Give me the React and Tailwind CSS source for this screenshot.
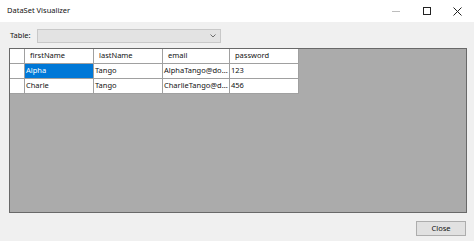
import React from "react";

// rows shown in the grid
const columns = [
  { key: "firstName", width: "w-[69px]" },
  { key: "lastName", width: "w-[69px]" },
  { key: "email", width: "w-[67px]" },
  { key: "password", width: "w-[69px]" },
];

const rows = [
  { firstName: "Alpha", lastName: "Tango", email: "AlphaTango@do...", password: "123" },
  { firstName: "Charle", lastName: "Tango", email: "CharlieTango@d...", password: "456" },
];

const App = () => {
  return (
    <div
      className="w-[474px] h-[244px] bg-[#f0f0f0] flex flex-col text-[#111] overflow-hidden border-b-[3px] border-white"
      style={{ fontFamily: '"Noto Sans", "Open Sans", sans-serif' }}
    >
      {/* title bar */}
      <div className="h-[22px] bg-white flex items-center shrink-0">
        <div className="pl-[7px] text-[7.5px] flex-1">DataSet Visualizer</div>
        <div className="flex items-center h-full">
          {/* minimize */}
          <div className="w-[31px] h-full flex items-center justify-center">
            <div className="w-[8px] h-px bg-[#bdbdbd]" />
          </div>
          {/* maximize */}
          <div className="w-[31px] h-full flex items-center justify-center">
            <div className="w-[8px] h-[8px] border border-[#222]" />
          </div>
          {/* close */}
          <div className="w-[31px] h-full flex items-center justify-center mr-[1px]">
            <svg width="9" height="9" viewBox="0 0 9 9">
              <path d="M0.5 0.5 L8.5 8.5 M8.5 0.5 L0.5 8.5" stroke="#222" strokeWidth="1" />
            </svg>
          </div>
        </div>
      </div>

      {/* body */}
      <div className="flex-1 flex flex-col px-[9px] pt-[7px]">
        {/* table picker */}
        <div className="flex items-center h-[14px]">
          <span className="text-[7.5px] pl-[1px] w-[28px]">Table:</span>
          <div className="w-[184px] h-[14px] bg-[#e3e3e3] border border-[#c8c8c8] flex items-center justify-end pr-[4px]">
            <svg width="6" height="4" viewBox="0 0 6 4">
              <path d="M0.5 0.5 L3 3 L5.5 0.5" stroke="#606060" strokeWidth="0.9" fill="none" />
            </svg>
          </div>
        </div>

        {/* data grid */}
        <div className="mt-[5px] w-[458px] h-[165px] bg-[#ababab] border border-[#696969]">
          <div className="flex flex-col w-fit text-[7.5px] bg-white">
            <div className="flex h-[15px]">
              <div className="w-[15px] border-r border-b border-[#a0a0a0]" />
              {columns.map((c) => (
                <div
                  key={c.key}
                  className={`${c.width} border-r border-b border-[#a0a0a0] pl-[5px] flex items-center`}
                >
                  {c.key}
                </div>
              ))}
            </div>
            {rows.map((r, i) => (
              <div key={i} className="flex h-[15px]">
                <div className="w-[15px] border-r border-b border-[#a0a0a0]" />
                {columns.map((c, j) => {
                  const selected = i === 0 && j === 0;
                  return (
                    <div
                      key={c.key}
                      className={
                        selected
                          ? `${c.width} border-r border-b border-[#a0a0a0] pl-[1px] flex items-center bg-[#0078d7] text-white whitespace-nowrap overflow-hidden`
                          : `${c.width} border-r border-b border-[#a0a0a0] pl-[1px] flex items-center whitespace-nowrap overflow-hidden`
                      }
                    >
                      {r[c.key]}
                    </div>
                  );
                })}
              </div>
            ))}
          </div>
        </div>

        {/* footer */}
        <div className="flex justify-end mt-[8px]">
          <button className="w-[50px] h-[15px] bg-[#e1e1e1] border border-[#adadad] text-[7.5px] flex items-center justify-center mr-[-1px]">
            Close
          </button>
        </div>
      </div>
    </div>
  );
};

export default App;
